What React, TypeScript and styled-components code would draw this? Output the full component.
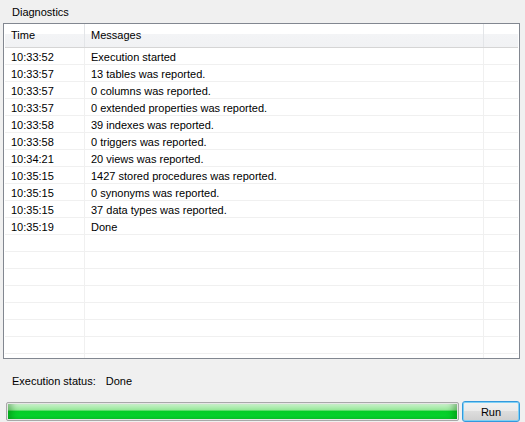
import React from "react";
import styled, { createGlobalStyle } from "styled-components";

const GlobalStyle = createGlobalStyle`
  html, body {
    margin: 0;
    padding: 0;
    background: #f0f0f0;
  }
  body {
    font-family: "Liberation Sans", Arial, sans-serif;
    font-size: 11px;
    color: #000;
  }
`;

type LogEntry = {
  time: string;
  message: string;
};

const entries: LogEntry[] = [
  { time: "10:33:52", message: "Execution started" },
  { time: "10:33:57", message: "13 tables was reported." },
  { time: "10:33:57", message: "0 columns was reported." },
  { time: "10:33:57", message: "0 extended properties was reported." },
  { time: "10:33:58", message: "39 indexes was reported." },
  { time: "10:33:58", message: "0 triggers was reported." },
  { time: "10:34:21", message: "20 views was reported." },
  { time: "10:35:15", message: "1427 stored procedures was reported." },
  { time: "10:35:15", message: "0 synonyms was reported." },
  { time: "10:35:15", message: "37 data types was reported." },
  { time: "10:35:19", message: "Done" },
];

const TOTAL_ROWS = 19;

const Window = styled.div`
  width: 525px;
  height: 422px;
  display: flex;
  flex-direction: column;
  box-sizing: border-box;
  padding: 0 5px 0 3px;
  background: #f0f0f0;
`;

const SectionLabel = styled.div`
  height: 23px;
  line-height: 24px;
  padding-left: 9px;
`;

const ListView = styled.div`
  height: 342px;
  box-sizing: border-box;
  border: 1px solid #828790;
  background: #fff;
  overflow: hidden;
  padding: 0 1px;
`;

const Columns = "80px 399px 1fr";

const HeaderRow = styled.div`
  display: grid;
  grid-template-columns: ${Columns};
  height: 24px;
  box-sizing: border-box;
  background: linear-gradient(#ffffff 0%, #ffffff 42%, #f3f4f6 43%, #f1f2f4 100%);
  border-bottom: 1px solid #d5d5d5;
`;

const HeaderCell = styled.div<{ $last?: boolean }>`
  padding-left: 6px;
  line-height: 23px;
  border-right: ${(p) => (p.$last ? "none" : "1px solid #e3e5e8")};
  white-space: nowrap;
`;

const Row = styled.div`
  display: grid;
  grid-template-columns: ${Columns};
  height: 17px;
  box-sizing: border-box;
  border-bottom: 1px solid #f0f0f0;
`;

const Cell = styled.div<{ $last?: boolean }>`
  padding: 2px 0 0 6px;
  line-height: 14px;
  border-right: ${(p) => (p.$last ? "none" : "1px solid #f0f0f0")};
  white-space: nowrap;
  overflow: hidden;
`;

const StatusLine = styled.div`
  height: 30px;
  display: flex;
  align-items: flex-end;
  padding-left: 9px;
  gap: 10px;
  line-height: 16px;
`;

const Footer = styled.div`
  display: flex;
  align-items: center;
  gap: 3px;
  margin-top: 12px;
`;

const ProgressTrack = styled.div`
  flex: 1;
  margin-left: 3px;
  height: 19px;
  box-sizing: border-box;
  border: 1px solid #a8a8a8;
  border-radius: 2px;
  background: #e6e6e6;
  padding: 1px;
`;

const ProgressFill = styled.div`
  height: 100%;
  background: linear-gradient(
    #d6f7d6 0%,
    #b0edb2 20%,
    #96e697 40%,
    #05cd28 48%,
    #06d22c 80%,
    #0cc52d 100%
  );
  box-shadow: inset 8px 0 6px -4px rgba(0, 90, 0, 0.35),
    inset -8px 0 6px -4px rgba(0, 90, 0, 0.35);
`;

const RunButton = styled.button`
  width: 58px;
  height: 21px;
  box-sizing: border-box;
  border: 1px solid #3399dd;
  border-radius: 3px;
  background: linear-gradient(#f2f2f2 0%, #ebebeb 45%, #dddddd 50%, #cfcfcf 100%);
  box-shadow: inset 0 0 0 1px #7fd0f4;
  font-family: "Liberation Sans", Arial, sans-serif;
  font-size: 11px;
  color: #000;
  padding: 0;
`;

const App: React.FC = () => {
  const rows: (LogEntry | null)[] = Array.from(
    { length: TOTAL_ROWS },
    (_, i) => entries[i] ?? null
  );

  return (
    <>
      <GlobalStyle />
      <Window>
        <SectionLabel>Diagnostics</SectionLabel>
        <ListView>
          <HeaderRow>
            <HeaderCell>Time</HeaderCell>
            <HeaderCell>Messages</HeaderCell>
            <HeaderCell $last />
          </HeaderRow>
          {rows.map((entry, i) => (
            <Row key={i}>
              <Cell>{entry?.time}</Cell>
              <Cell>{entry?.message}</Cell>
              <Cell $last />
            </Row>
          ))}
        </ListView>
        <StatusLine>
          <span>Execution status:</span>
          <span>Done</span>
        </StatusLine>
        <Footer>
          <ProgressTrack>
            <ProgressFill />
          </ProgressTrack>
          <RunButton>Run</RunButton>
        </Footer>
      </Window>
    </>
  );
};

export default App;
